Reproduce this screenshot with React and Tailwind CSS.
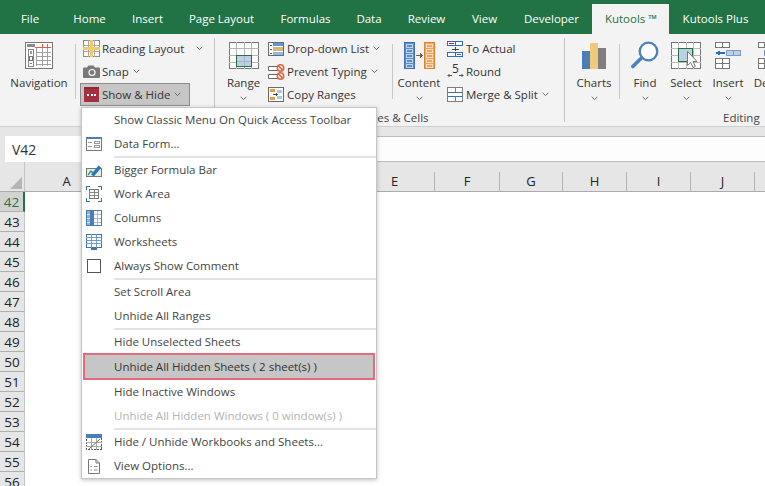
import React from "react";

const Chev = ({ className = "" }) => (
  <svg width="7" height="5" viewBox="0 0 7 5" className={className}>
    <path d="M.7.8 3.5 3.6 6.3.8" fill="none" stroke="#666" strokeWidth="1" />
  </svg>
);

const Ic = ({ w = 16, h = 16, children }) => (
  <svg width={w} height={h} viewBox={`0 0 ${w} ${h}`} className="shrink-0" shapeRendering="crispEdges">
    {children}
  </svg>
);

const Navigation = () => (
  <Ic w={28} h={27}>
    <rect x=".5" y=".5" width="27" height="26" fill="#fff" stroke="#777" />
    <rect x="2" y="2" width="24" height="3" fill="#8a8a8a" />
    <rect x="10" y="2" width="16" height="3" fill="#fff" />
    <path d="M10 5h16M11 10.500h15M11 14.500h15M11 18.500h15M11 22.500h15M11 5v19M17.500 5v19M22.500 5v19" stroke="#a0a0a0" fill="none" />
    <path d="M10 5.500h16M17.500 2v4M22.500 2v4" stroke="#e8584f" fill="none" />
    <rect x="3.500" y="7.500" width="5" height="17" fill="#fff" stroke="#888" />
    <rect x="5" y="9" width="2" height="3" fill="#999" />
    <rect x="4.500" y="14.500" width="3" height="4" fill="none" stroke="#777" />
    <rect x="5" y="21" width="2" height="1" fill="#777" />
  </Ic>
);
const Reading = () => (
  <Ic w={17} h={17}>
    <rect x=".5" y=".5" width="16" height="16" fill="#fff" stroke="#8c8c8c" />
    <path d="M5.500 0v17M11.500 0v17M0 5.500h17M0 11.500h17" stroke="#a8a8a8" />
    <path d="M7 0h3v17H7zM0 7h17v3H0z" fill="#f4c96c" />
  </Ic>
);
const Camera = () => (
  <svg width="17" height="13" viewBox="0 0 17 13" className="shrink-0">
    <path d="M1 2.500h3l1.500-2h5l1.500 2h4a1 1 0 0 1 1 1V12a1 1 0 0 1-1 1H1a1 1 0 0 1-1-1V3.500a1 1 0 0 1 1-1z" fill="#7a7a7a" />
    <circle cx="9" cy="7.500" r="3.600" fill="#fff" />
    <circle cx="9" cy="7.500" r="2.400" fill="#7a7a7a" />
  </svg>
);
const ShowHide = () => (
  <Ic w={15} h={15}>
    <rect width="15" height="15" rx="1" fill="#a4303f" />
    <rect y="0" width="15" height="2" fill="#8f2735" />
    <path d="M3 7h2v2H3zM6.500 7h2v2h-2zM10 7h2v2h-2z" fill="#fff" />
  </Ic>
);
const RangeIcon = () => (
  <Ic w={30} h={27}>
    <rect x=".5" y=".5" width="29" height="26" fill="#fff" stroke="#777" />
    <path d="M0 6.500h30M0 13.500h30M0 20.500h30M7.500 0v27M15 0v27M22.500 0v27" stroke="#b5b5b5" />
    <rect x="7.500" y="13.500" width="15" height="11" fill="#bcd0e6" stroke="#217346" />
    <path d="M15 14v10M8 19h14" stroke="#a5b5c5" />
  </Ic>
);
const Dropdown = () => (
  <Ic w={16} h={14}>
    <rect x=".5" y=".5" width="15" height="13" fill="#fff" stroke="#6b6b6b" />
    <rect x="5" y="1" width="10" height="3" fill="#5b9bd5" />
    <rect x="5" y="5" width="10" height="4" fill="#d8b878" />
    <rect x="5" y="10" width="10" height="3" fill="#8fbce6" />
    <path d="M2 3h2M2 7h2M2 11h2" stroke="#555" />
  </Ic>
);
const Prevent = () => (
  <svg width="17" height="16" viewBox="0 0 17 16" className="shrink-0">
    <path d="M.5 2.500h9v4h-9zM.5 10.500h9v4h-9z" fill="#fff" stroke="#666" />
    <g fill="none" stroke="#e2653a" strokeWidth="1.500">
      <circle cx="12.500" cy="4" r="3.200" />
      <circle cx="12.500" cy="12" r="3.200" />
      <path d="m10.300 1.800 4.400 4.400M10.300 9.800l4.400 4.400" />
    </g>
  </svg>
);
const CopyRanges = () => (
  <Ic w={16} h={15}>
    <rect x=".5" y=".5" width="15" height="14" fill="#fff" stroke="#6b6b6b" />
    <rect x="2" y="2" width="5" height="3" fill="#ed9a45" />
    <rect x="2" y="10" width="5" height="3" fill="#ed9a45" />
    <rect x="9" y="3" width="5" height="3" fill="#a9c6e4" />
    <rect x="9" y="9" width="5" height="3" fill="#a9c6e4" />
    <path d="M5 7.500h5M8 6v3" stroke="#444" />
  </Ic>
);
const Content = () => {
  const col = (x, f, s) => (
    <g key={x}>
      <rect x={x + 0.5} y=".5" width="10" height="26" fill={f} stroke={s} />
      {[2, 7, 12, 17, 22].map((y) => (
        <rect key={y} x={x + 2.5} y={y + 0.5} width="6" height="3" fill="none" stroke="#f4f7fa" opacity=".65" />
      ))}
    </g>
  );
  return (
    <Ic w={31} h={27}>
      {col(0, "#5b8fc9", "#3f72ad")}
      {col(20, "#f2a65a", "#dd8430")}
      <path d="M12 13.500h5" stroke="#666" />
      <path d="M16 11h1v5h-1zM17 12h1v3h-1zM18 13h1v1h-1z" fill="#666" />
    </Ic>
  );
};
const ToActual = () => (
  <Ic w={16} h={16}>
    <path d="M.5.500h15v4H.5zM.5 11.500h15v4H.5zM8.500 0v5M8.500 11v5" fill="#fff" stroke="#2e6fb0" />
    <path d="M2 2.500h5" stroke="#c0213a" strokeWidth="1" />
    <path d="M10 13.500h4" stroke="#6a5acd" />
    <path d="M5 8.500h7M8.500 6v4" stroke="#444" />
  </Ic>
);
const RoundIcon = () => (
  <span className="relative flex h-[15px] w-[17px] shrink-0 items-center justify-center">
    <svg width="17" height="15" viewBox="0 0 17 15" className="absolute inset-0">
      <path d="M1 11.500h4M12 11.500h4M2.500 10 1 11.500 2.500 13M14.500 10l1.500 1.500-1.500 1.500" fill="none" stroke="#555" />
    </svg>
    <span className="absolute top-[-4px] left-[5px] text-[12px] font-['Open_Sans',sans-serif] text-[#333]">5</span>
  </span>
);
const Merge = () => (
  <Ic w={16} h={15}>
    <rect x=".5" y=".5" width="15" height="14" fill="#fff" stroke="#7d7d7d" />
    <path d="M8.500 0v15" stroke="#7d7d7d" />
    <rect x="1" y="5" width="14" height="5" fill="#fff" />
    <path d="M1 5.500h14M1 9.500h14" stroke="#2e75b6" />
  </Ic>
);
const Charts = () => (
  <Ic w={24} h={26}>
    <rect x="0" y="8" width="8" height="18" fill="#4a7fb5" />
    <rect x="8" y="0" width="8" height="26" fill="#f0c97b" />
    <rect x="16" y="5" width="8" height="21" fill="#7f7f7f" />
  </Ic>
);
const Find = () => (
  <svg width="28" height="28" viewBox="0 0 28 28" className="shrink-0">
    <circle cx="17.500" cy="10.500" r="8.800" fill="#fff" stroke="#4a82bd" strokeWidth="2.300" />
    <path d="M10.500 17 1.800 25.500" stroke="#4a82bd" strokeWidth="3.600" strokeLinecap="round" />
  </svg>
);
const Select = () => (
  <svg width="30" height="27" viewBox="0 0 30 27" className="shrink-0">
    <g shapeRendering="crispEdges">
      <rect x=".5" y=".5" width="29" height="26" fill="#fff" stroke="#777" />
      <path d="M0 6.500h30M0 13.500h30M0 20.500h30M7.500 0v27M15 0v27M22.500 0v27" stroke="#bbb" />
      <rect x="7.500" y="6.500" width="14" height="13" fill="#bcd0e6" stroke="#217346" />
    </g>
    <path d="M16.500 9.500v14l3.200-3 2.300 5 2.300-1-2.300-5H26z" fill="#fff" stroke="#777" />
  </svg>
);
const InsertIcon = () => (
  <Ic w={26} h={27}>
    <path d="M.5.500h14v5H.5zM7.500 0v5M.5 16.500h14v10H.5zM0 21.500h14M7.500 16v11" fill="#fff" stroke="#777" />
    <rect x="11.500" y="8.500" width="14" height="5" fill="#bcd0e6" stroke="#7a9cc0" />
    <path d="M18.500 8v6" stroke="#7a9cc0" />
    <path d="M2 11h8" stroke="#2e6fb0" strokeWidth="2" />
    <path d="M3 9h2v4H3zM1 10h2v2H1z" fill="#2e6fb0" />
  </Ic>
);
const DeleteIcon = () => (
  <Ic w={26} h={27}>
    <path d="M.5.500h12v5H.5zM6.500 0v5M.5 16.500h12v10H.5zM0 21.500h12M6.500 16v11" fill="#fff" stroke="#777" />
    <rect x="6.500" y="8.500" width="14" height="5" fill="#bcd0e6" stroke="#7a9cc0" />
  </Ic>
);

const DataForm = () => (
  <Ic w={16} h={14}>
    <rect x=".5" y=".5" width="15" height="13" fill="#fff" stroke="#777" />
    <rect x="0" y="0" width="16" height="2" fill="#4a7fb5" />
    <path d="M2 5.500h4M2 9.500h4M8.500 4.500h5v2h-5zM8.500 8.500h5v2h-5z" fill="none" stroke="#999" />
  </Ic>
);
const Bigger = () => (
  <svg width="16" height="13" viewBox="0 0 16 13" className="shrink-0">
    <rect x=".5" y="4.500" width="15" height="8" fill="#dff0e6" stroke="#777" />
    <path d="M2 11 5 7l2 2" fill="none" stroke="#2f9a6a" strokeWidth="1.300" />
    <path d="m5 10.500 7.500-9 2.800 2.200-7.500 8.800z" fill="#2e75b6" />
  </svg>
);
const WorkArea = () => (
  <Ic w={16} h={16}>
    <path d="M.5 4V.5H4M12 .5h3.500V4M15.500 12v3.500H12M4 15.500H.5V12" fill="none" stroke="#2e75b6" />
    <rect x="3.500" y="3.500" width="9" height="9" fill="#fff" stroke="#777" />
    <path d="M3 6.500h10M3 9.500h10M8 3v10" stroke="#888" />
  </Ic>
);
const Columns = () => (
  <Ic w={16} h={16}>
    <rect x=".5" y=".5" width="15" height="15" fill="#fff" stroke="#4a7fb5" />
    <rect x="1" y="1" width="3" height="14" fill="#8fb2d6" />
    <rect x="4" y="1" width="4" height="14" fill="#4a7fb5" />
    <path d="M8 4.500h7M8 8.500h7M8 12.500h7M11.500 1v14" stroke="#a8bdd2" />
    <path d="M1 4.500h3M1 8.500h3M1 12.500h3" stroke="#dbe7f2" />
  </Ic>
);
const Worksheets = () => (
  <Ic w={16} h={16}>
    <rect x=".5" y=".5" width="15" height="13" fill="#fff" stroke="#3f72ad" />
    <path d="M0 3.500h16M0 6.500h16M0 9.500h16M5.500 0v14M10.500 0v14" stroke="#6f9cc9" />
    <rect x="5" y="14" width="6" height="2" fill="#3f72ad" />
  </Ic>
);
const Book = () => (
  <Ic w={16} h={16}>
    <rect x=".5" y=".5" width="15" height="15" fill="#fff" stroke="#555" strokeDasharray="2 1" />
    <rect x="0" y="0" width="16" height="4" fill="#4a7fb5" />
    <path d="M5.500 4v12M10.500 4v12M0 8.500h16M0 12.500h16" stroke="#aaa" />
    <path d="m3 15 11-10" stroke="#777" shapeRendering="auto" />
  </Ic>
);
const ViewOpts = () => (
  <svg width="12" height="15" viewBox="0 0 12 15" className="shrink-0">
    <path d="M.5.500h7.500l3.500 3.500v10.500H.5z" fill="#fff" stroke="#777" />
    <path d="M8 .5V4h3.500" fill="none" stroke="#777" />
    <path d="M2.500 7.500h1.500M2.500 11h1.500M6 7.500h3.500M6 11h3.500" stroke="#888" />
  </svg>
);
const Box = () => <span className="block h-[14px] w-[14px] shrink-0 border border-[#555] bg-white" />;

const Big = ({ icon, label, w, noChev }) => (
  <div className={`flex shrink-0 flex-col items-center pt-[7px] ${w}`}>
    <div className="flex h-[28px] items-end">{icon}</div>
    <div className="mt-[5px] whitespace-nowrap leading-[18px]">{label}</div>
    {!noChev && <Chev className="mt-[4px]" />}
  </div>
);
const Small = ({ icon, label, chev, iw = "w-[19px]", gapC = "ml-[4px]" }) => (
  <div className="flex h-[23px] items-center whitespace-nowrap">
    <span className={`flex ${iw} shrink-0 items-center`}>{icon}</span>
    <span>{label}</span>
    {chev && <Chev className={gapC} />}
  </div>
);
const VSep = () => <div className="mt-[10px] h-[55px] w-px shrink-0 bg-[#c8c8c8]" />;
const GroupSep = () => <div className="mt-[4px] h-[84px] w-px shrink-0 bg-[#c4c4c4]" />;

const tabs = [
  ["File", "w-[59px]"],
  ["Home", "w-[60px]"],
  ["Insert", "w-[56px]"],
  ["Page Layout", "w-[92px]"],
  ["Formulas", "w-[76px]"],
  ["Data", "w-[51px]"],
  ["Review", "w-[64px]"],
  ["View", "w-[52px]"],
  ["Developer", "w-[82px]"],
];

const MENU = [
  { t: "Show Classic Menu On Quick Access Toolbar" },
  { t: "Data Form...", i: <DataForm /> },
  "sep",
  { t: "Bigger Formula Bar", i: <Bigger /> },
  { t: "Work Area", i: <WorkArea /> },
  { t: "Columns", i: <Columns /> },
  { t: "Worksheets", i: <Worksheets /> },
  { t: "Always Show Comment", i: <Box /> },
  "sep",
  { t: "Set Scroll Area" },
  { t: "Unhide All Ranges" },
  "sep",
  { t: "Hide Unselected Sheets" },
  { t: "Unhide All Hidden Sheets ( 2 sheet(s) )", hi: true },
  "sep",
  { t: "Hide Inactive Windows" },
  { t: "Unhide All Hidden Windows ( 0 window(s) )", dis: true },
  "sep",
  { t: "Hide / Unhide Workbooks and Sheets...", i: <Book /> },
  { t: "View Options...", i: <ViewOpts /> },
];

const cols = [
  ["A", "w-[84px]"],
  ["", "w-[246px]"],
  ["E", "w-[80px]"],
  ["F", "w-[65px]"],
  ["G", "w-[63px]"],
  ["H", "w-[64px]"],
  ["I", "w-[64px]"],
  ["J", "w-[64px]"],
  ["", "w-[64px]"],
];
const rows = Array.from({ length: 15 }, (_, i) => 42 + i);

export default function App() {
  return (
    <div className="relative h-[486px] w-[765px] overflow-hidden bg-white font-['Open_Sans',sans-serif] text-[11.5px] text-[#333]">
      {/* tabs */}
      <div className="flex h-[34px] items-end bg-[#217346] text-white">
        {tabs.map(([t, w]) => (
          <div key={t} className={`flex h-[30px] shrink-0 items-center justify-center pb-[1px] pl-[1px] ${w}`}>{t}</div>
        ))}
        <div className="flex h-[30px] w-[77px] shrink-0 items-center justify-center bg-[#f3f3f3] pb-[1px] pl-[1px] text-[#217346]">Kutools ™</div>
        <div className="flex h-[30px] w-[92px] shrink-0 items-center justify-center pb-[1px] pl-[1px]">Kutools Plus</div>
      </div>

      {/* ribbon */}
      <div className="flex h-[93px] overflow-hidden border-b border-[#d0d0d0] bg-[#f3f3f3]">
        <div className="flex w-[214px] shrink-0">
          <Big w="w-[75px] pl-[3px]" icon={<Navigation />} label="Navigation" noChev />
          <VSep />
          <div className="ml-[7px] flex flex-col pt-[3px]">
            <Small icon={<Reading />} label="Reading Layout" chev gapC="ml-[12px]" />
            <Small icon={<Camera />} label="Snap" chev />
            <div className="-ml-[3px] flex h-[23px] w-[110px] items-center whitespace-nowrap border border-[#8c8c8c] bg-[#c6c6c6] pl-[3px]">
              <span className="flex w-[18px] items-center"><ShowHide /></span>
              <span>Show &amp; Hide</span>
              <Chev className="ml-[4px]" />
            </div>
          </div>
        </div>
        <GroupSep />
        <div className="relative flex w-[349px] shrink-0">
          <Big w="w-[57px]" icon={<RangeIcon />} label="Range" />
          <div className="ml-[-4px] flex w-[124px] flex-col pt-[3px]">
            <Small icon={<Dropdown />} label="Drop-down List" chev />
            <Small icon={<Prevent />} label="Prevent Typing" chev />
            <Small icon={<CopyRanges />} label="Copy Ranges" />
          </div>
          <VSep />
          <Big w="w-[52px]" icon={<Content />} label="Content" />
          <div className="ml-[2px] flex flex-col pt-[3px]">
            <Small icon={<ToActual />} label="To Actual" />
            <Small icon={<RoundIcon />} label="Round" />
            <Small icon={<Merge />} label="Merge & Split" chev />
          </div>
          <div className="absolute bottom-0 left-0 w-full text-center leading-[16px] text-[#444]">Ranges &amp; Cells</div>
        </div>
        <GroupSep />
        <div className="relative flex grow">
          <Big w="w-[50px] ml-[4px]" icon={<Charts />} label="Charts" />
          <VSep />
          <Big w="w-[50px]" icon={<Find />} label="Find" />
          <Big w="w-[32px]" icon={<Select />} label="Select" />
          <Big w="w-[52px]" icon={<InsertIcon />} label="Insert" />
          <Big w="w-[34px]" icon={<DeleteIcon />} label="Delete" />
          <div className="absolute bottom-0 left-[158px] leading-[16px] text-[#444]">Editing</div>
        </div>
      </div>

      {/* formula band */}
      <div className="flex h-[35px] items-end bg-[#e6e6e6]">
        <div className="ml-[5px] flex h-[26px] w-[76px] items-center bg-white pl-[7px] text-[14px] text-[#333]">V42</div>
        <div className="ml-[4px] h-[26px] grow border-y border-[#bdbdbd] bg-[#fdfdfd]" />
      </div>

      {/* column header */}
      <div className="flex h-[30px] border-b border-[#ababab] bg-[#e6e6e6]">
        <div className="relative w-[25px] shrink-0 border-r border-[#c4c4c4]">
          <svg width="12" height="12" viewBox="0 0 12 12" className="absolute right-[2px] bottom-[2px]">
            <path d="M12 0v12H0z" fill="#b5b5b5" />
          </svg>
        </div>
        {cols.map(([c, w], i) => (
          <div key={i} className={`flex shrink-0 items-end justify-center ${w}`}>
            <div className="flex h-[19px] w-full items-center justify-center border-r border-[#b5b5b5] pt-[1px] text-[13px] text-[#222]">{c}</div>
          </div>
        ))}
      </div>

      {/* rows */}
      <div className="w-[25px]">
        {rows.map((r) => (
          <div
            key={r}
            className={`flex h-[20px] items-center justify-center border-b border-[#b0b0b0] pt-[2px] text-[13.5px] ${
              r === 42 ? "border-r-2 border-r-[#217346] bg-[#d2d2d2] text-[#217346]" : "border-r border-r-[#c4c4c4] bg-[#e6e6e6] text-[#222]"
            }`}
          >
            {r}
          </div>
        ))}
      </div>

      {/* menu */}
      <div className="absolute top-[107px] left-[81px] w-[296px] border border-[#c6c6c6] bg-white text-[#444] shadow-[0_1px_4px_rgba(0,0,0,0.25)]">
        {MENU.map((m, i) =>
          m === "sep" ? (
            <div key={i} className="ml-[32px] h-[2px] border-b-2 border-[#e3e3e3]" />
          ) : (
            <div
              key={m.t}
              className={`flex items-center whitespace-nowrap ${
                m.hi
                  ? "relative z-10 mx-[1px] -mt-[1px] -mb-[2px] h-[27px] border-2 border-[#e8697c] bg-[#c6c6c6] text-[#333]"
                  : "h-[24px]"
              } ${m.dis ? "text-[#b4b4b4]" : ""}`}
            >
              <span className={`flex shrink-0 items-center justify-center ${m.hi ? "w-[29px]" : "w-[32px] pr-[8px]"}`}>{m.i}</span>
              <span>{m.t}</span>
            </div>
          )
        )}
      </div>
    </div>
  );
}
